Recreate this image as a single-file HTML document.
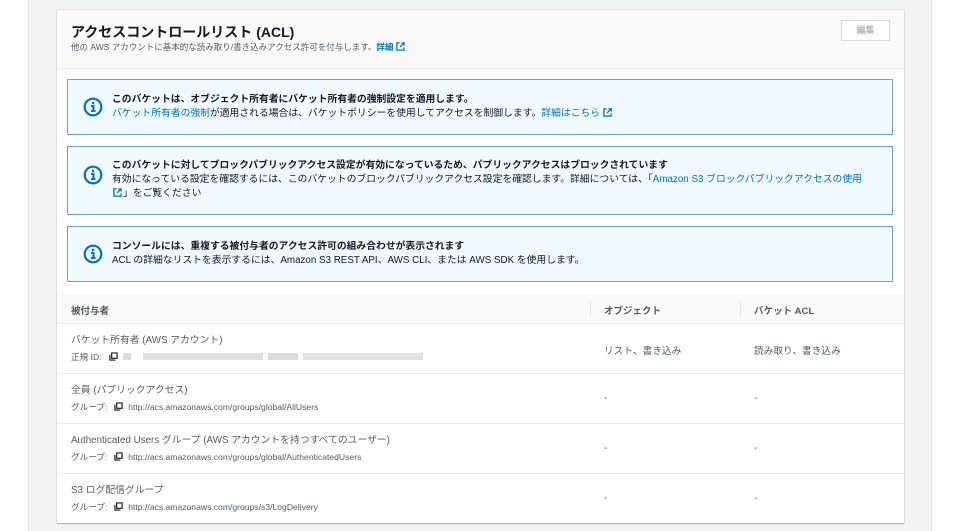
<!DOCTYPE html>
<html><head><meta charset="utf-8"><style>
*{margin:0;padding:0;box-sizing:border-box}
body{width:960px;height:531px;overflow:hidden;background:#fff;font-family:"Liberation Sans","Noto Sans CJK JP",sans-serif;color:#16191f;position:relative}
.bg{position:absolute;left:28px;top:0;width:904px;height:531px;background:#f2f3f3;border-left:1px solid #e4e4e4;border-right:1px solid #e4e4e4}
.card{position:absolute;left:57px;top:10px;width:847px;height:513px;background:#fff;box-shadow:0 1px 1px rgba(0,0,0,.25),0 0 0 1px #e8e8e8}
.hdr{position:absolute;left:0;top:0;width:100%;height:59px;background:#fafafa;border-bottom:1px solid #eaeded}
.t{position:absolute;left:14px;top:12px;font-size:14px;font-weight:bold}
.st{position:absolute;left:14px;top:31px;font-size:8.5px;color:#545b64}
a{color:#0073bb;text-decoration:none}
.btn{position:absolute;right:14px;top:10px;width:49px;height:21px;border:1px solid #d5dbdb;background:#fff;color:#aab7b8;font-size:9px;font-weight:bold;text-align:center;line-height:19px}
.al{position:absolute;left:10px;width:826px;background:#f1faff;border:1px solid #6aa1d6}
.ic{position:absolute;left:15px;width:20px;height:20px}
.al .tx{position:absolute;left:44px;font-size:9.8px;line-height:14px;color:#16191f}
.al b{font-weight:bold}
.ext{display:inline-block;width:9px;height:9px;vertical-align:-1px;margin-left:3px}
.th{position:absolute;left:0;top:284px;width:100%;height:30px;background:#fafafa;border-bottom:1px solid #eaeded;font-size:9.5px;font-weight:bold;color:#545b64}
.th span{position:absolute;top:9px}
.sep{position:absolute;top:7px;width:1px;height:16px;background:#e5e5e5}
.row{position:absolute;left:0;width:100%;height:50px;border-bottom:1px solid #eaeded;font-size:9.7px;color:#545b64}
.row .n{position:absolute;left:14px;top:8px;font-size:9.8px}
.row .s{position:absolute;left:14px;top:27px;font-size:8.6px;color:#545b64}
.row .c1{position:absolute;left:547px;top:19px}
.row .c2{position:absolute;left:697px;top:19px}
.cp{display:inline-block;width:9px;height:9px;vertical-align:-1px;margin:0 5px 0 7px}
.blur{display:inline-block;width:300px;height:7px;vertical-align:0;background:linear-gradient(90deg,#ddd 0 8px,#fff 8px 20px,#e0e0e0 20px 140px,#fff 140px 145px,#ddd 145px 175px,#fff 175px 180px,#e2e2e2 180px 300px)}
</style></head><body>
<div class="bg"></div>
<div class="card">
 <div class="hdr">
  <div class="t">アクセスコントロールリスト (ACL)</div>
  <div class="st">他の AWS アカウントに基本的な読み取り/書き込みアクセス許可を付与します。<a href="#"><b>詳細</b></a><svg class="ext" viewBox="0 0 10 10"><path d="M4 1H1v8h8V6M6 1h3v3M9 1L4.5 5.5" fill="none" stroke="#0073bb" stroke-width="1.4"/></svg></div>
  <div class="btn">編集</div>
 </div>
 <div class="al" style="top:69px;height:56px">
  <svg class="ic" style="top:17px" viewBox="0 0 20 20"><circle cx="10" cy="10" r="8.3" fill="none" stroke="#0073bb" stroke-width="2.2"/><circle cx="10" cy="6" r="1.3" fill="#0073bb"/><path d="M8 9h2.5v5M8 14h4.5" fill="none" stroke="#0073bb" stroke-width="2"/></svg>
  <div class="tx" style="top:13px"><b>このバケットは、オブジェクト所有者にバケット所有者の強制設定を適用します。</b><br><a href="#">バケット所有者の強制</a>が適用される場合は、バケットポリシーを使用してアクセスを制御します。<a href="#">詳細はこちら</a><svg class="ext" viewBox="0 0 10 10"><path d="M4 1H1v8h8V6M6 1h3v3M9 1L4.5 5.5" fill="none" stroke="#0073bb" stroke-width="1.4"/></svg></div>
 </div>
 <div class="al" style="top:136px;height:69px">
  <svg class="ic" style="top:18px" viewBox="0 0 20 20"><circle cx="10" cy="10" r="8.3" fill="none" stroke="#0073bb" stroke-width="2.2"/><circle cx="10" cy="6" r="1.3" fill="#0073bb"/><path d="M8 9h2.5v5M8 14h4.5" fill="none" stroke="#0073bb" stroke-width="2"/></svg>
  <div class="tx" style="top:12px"><b>このバケットに対してブロックパブリックアクセス設定が有効になっているため、パブリックアクセスはブロックされています</b><br>有効になっている設定を確認するには、このバケットのブロックパブリックアクセス設定を確認します。詳細については、「<a href="#">Amazon S3 ブロックパブリックアクセスの使用</a><br><svg class="ext" style="margin:0 1px 0 1px" viewBox="0 0 10 10"><path d="M4 1H1v8h8V6M6 1h3v3M9 1L4.5 5.5" fill="none" stroke="#0073bb" stroke-width="1.4"/></svg>」をご覧ください</div>
 </div>
 <div class="al" style="top:216px;height:56px">
  <svg class="ic" style="top:17px" viewBox="0 0 20 20"><circle cx="10" cy="10" r="8.3" fill="none" stroke="#0073bb" stroke-width="2.2"/><circle cx="10" cy="6" r="1.3" fill="#0073bb"/><path d="M8 9h2.5v5M8 14h4.5" fill="none" stroke="#0073bb" stroke-width="2"/></svg>
  <div class="tx" style="top:13px"><b>コンソールには、重複する被付与者のアクセス許可の組み合わせが表示されます</b><br>ACL の詳細なリストを表示するには、Amazon S3 REST API、AWS CLI、または AWS SDK を使用します。</div>
 </div>
 <div class="th"><span style="left:14px">被付与者</span><div class="sep" style="left:533px"></div><span style="left:547px">オブジェクト</span><div class="sep" style="left:683px"></div><span style="left:697px">バケット ACL</span></div>
 <div class="row" style="top:314px"><div class="n">バケット所有者 (AWS アカウント)</div><div class="s">正規 ID:<svg class="cp" viewBox="0 0 10 10"><path d="M3 1h6v6H3zM1 3v6h6" fill="none" stroke="#16191f" stroke-width="1.3"/></svg><span class="blur"></span></div><div class="c1">リスト、書き込み</div><div class="c2">読み取り、書き込み</div></div>
 <div class="row" style="top:364px"><div class="n">全員 (パブリックアクセス)</div><div class="s">グループ:<svg class="cp" viewBox="0 0 10 10"><path d="M3 1h6v6H3zM1 3v6h6" fill="none" stroke="#16191f" stroke-width="1.3"/></svg>http://acs.amazonaws.com/groups/global/AllUsers</div><div class="c1">-</div><div class="c2">-</div></div>
 <div class="row" style="top:414px"><div class="n">Authenticated Users グループ (AWS アカウントを持つすべてのユーザー)</div><div class="s">グループ:<svg class="cp" viewBox="0 0 10 10"><path d="M3 1h6v6H3zM1 3v6h6" fill="none" stroke="#16191f" stroke-width="1.3"/></svg>http://acs.amazonaws.com/groups/global/AuthenticatedUsers</div><div class="c1">-</div><div class="c2">-</div></div>
 <div class="row" style="top:464px;border-bottom:none"><div class="n">S3 ログ配信グループ</div><div class="s">グループ:<svg class="cp" viewBox="0 0 10 10"><path d="M3 1h6v6H3zM1 3v6h6" fill="none" stroke="#16191f" stroke-width="1.3"/></svg>http://acs.amazonaws.com/groups/s3/LogDelivery</div><div class="c1">-</div><div class="c2">-</div></div>
</div>
</body></html>
